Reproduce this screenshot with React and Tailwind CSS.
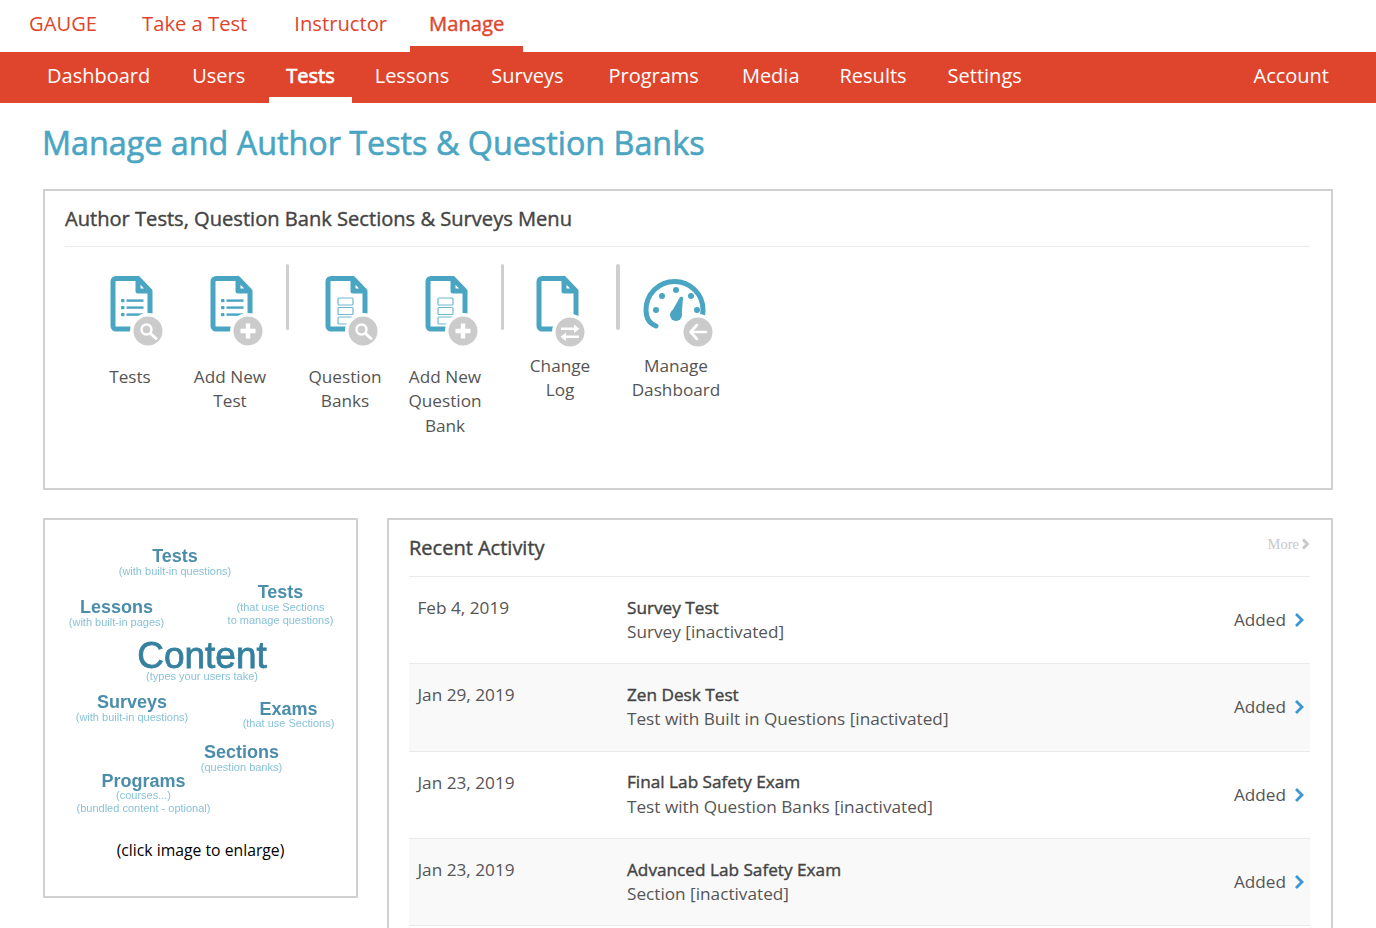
const sans = { fontFamily: '"Open Sans", sans-serif' };

const topNav = [
  { label: "GAUGE", cls: "ml-[9px] px-5" },
  { label: "Take a Test", cls: "ml-[5px] px-5" },
  { label: "Instructor", cls: "ml-[7px] px-5" },
  { label: "Manage", cls: "ml-[3px] px-[19px] [-webkit-text-stroke-width:0.4px]", active: true },
];

const subNav = [
  { label: "Dashboard", cls: "ml-[30px]" },
  { label: "Users", cls: "ml-[8px]" },
  { label: "Tests", cls: "ml-[7px] [-webkit-text-stroke-width:0.7px]", active: true },
  { label: "Lessons", cls: "ml-[6px]" },
  { label: "Surveys", cls: "ml-[8px]" },
  { label: "Programs", cls: "ml-[11px]" },
  { label: "Media", cls: "ml-[9px]" },
  { label: "Results", cls: "ml-[6px]" },
  { label: "Settings", cls: "ml-[7px]" },
];

const activity = [
  { date: "Feb 4, 2019", title: "Survey Test", sub: "Survey [inactivated]" },
  { date: "Jan 29, 2019", title: "Zen Desk Test", sub: "Test with Built in Questions [inactivated]" },
  { date: "Jan 23, 2019", title: "Final Lab Safety Exam", sub: "Test with Question Banks [inactivated]" },
  { date: "Jan 23, 2019", title: "Advanced Lab Safety Exam", sub: "Section [inactivated]" },
];

// word cloud: [text, x, y, size, heavy]
const cloud = [
  ["Tests", 130, 42, 18, 1],
  ["(with built-in questions)", 130, 55, 11, 0],
  ["Tests", 235.5, 78, 18, 1],
  ["(that use Sections", 235.5, 91, 11, 0],
  ["to manage questions)", 235.5, 104, 11, 0],
  ["Lessons", 71.5, 93, 18, 1],
  ["(with built-in pages)", 71.5, 106, 11, 0],
  ["Content", 157, 148, 37, 2],
  ["(types your users take)", 157, 160, 11, 0],
  ["Surveys", 87, 188, 18, 1],
  ["(with built-in questions)", 87, 201, 11, 0],
  ["Exams", 243.5, 195, 18, 1],
  ["(that use Sections)", 243.5, 207, 11, 0],
  ["Sections", 196.5, 238, 18, 1],
  ["(question banks)", 196.5, 251, 11, 0],
  ["Programs", 98.5, 267, 18, 1],
  ["(courses...)", 98.5, 279, 11, 0],
  ["(bundled content - optional)", 98.5, 292, 11, 0],
];

function Badge({ cx, cy, children }) {
  return (
    <g transform={`translate(${cx} ${cy})`}>
      <circle r="18" fill="#fff" />
      <circle r="14.5" fill="#cbcbcb" />
      {children}
    </g>
  );
}

const searchGlyph = (
  <g fill="none" stroke="#fff" strokeLinecap="round">
    <circle cx="-1.5" cy="-1.5" r="5" strokeWidth="2.4" />
    <path d="M2.5 2.5 L8 7.5" strokeWidth="3" />
  </g>
);

const plusGlyph = <path d="M0 -7.5 V7.5 M-7.5 0 H7.5" stroke="#fff" strokeWidth="4.4" fill="none" />;

const swapGlyph = (
  <g fill="#fff">
    <path d="M-9 -4.5 H4 V-7.5 L9.5 -3.3 L4 1 V-2 H-9 Z" />
    <path d="M9 4.5 H-4 V7.5 L-9.5 3.3 L-4 -1 V2 H9 Z" transform="translate(0 1.5)" />
  </g>
);

const backGlyph = <path d="M-1 -7 L-7.5 0 L-1 7 M-7 0 H8" stroke="#fff" strokeWidth="2.6" fill="none" strokeLinecap="round" strokeLinejoin="round" />;

function DocShape({ x = 0 }) {
  return (
    <path
      transform={`translate(${x} 0)`}
      d="M48 6.5 H26 a3 3 0 0 0 -3 3 V54 a3 3 0 0 0 3 3 H57 a3 3 0 0 0 3 -3 V19 L48 6.5 V19 H60"
      fill="none"
      stroke="#4aa5c3"
      strokeWidth="5"
      strokeLinejoin="round"
    />
  );
}

function ListLines() {
  return (
    <g fill="#4aa5c3">
      {[27, 34, 41].map((y) => (
        <g key={y}>
          <rect x="31" y={y} width="3.5" height="3.2" rx="1" />
          <rect x="36.5" y={y + 0.4} width="17" height="2.4" />
        </g>
      ))}
    </g>
  );
}

function BankRows() {
  return (
    <g fill="none" stroke="#6fb8d0" strokeWidth="1.2">
      <rect x="33" y="26" width="15" height="7" rx="1" />
      <rect x="33" y="35.5" width="15" height="7" rx="1" />
      <rect x="33" y="45" width="15" height="7" rx="1" />
    </g>
  );
}

function IconSvg({ children }) {
  return (
    <svg width="80" height="80" viewBox="0 0 80 80" className="block">
      {children}
    </svg>
  );
}

function TestIcon({ glyph }) {
  return (
    <IconSvg>
      <DocShape />
      <ListLines />
      <Badge cx={58} cy={59}>{glyph}</Badge>
    </IconSvg>
  );
}

function BankIcon({ glyph }) {
  return (
    <IconSvg>
      <DocShape />
      <BankRows />
      <Badge cx={58} cy={59}>{glyph}</Badge>
    </IconSvg>
  );
}

function LogIcon() {
  return (
    <IconSvg>
      <DocShape x={-4} />
      <Badge cx={50} cy={60}>{swapGlyph}</Badge>
    </IconSvg>
  );
}

function GaugeIcon() {
  return (
    <IconSvg>
      <g transform="translate(6 0)">
        <path d="M14 54 C6 51 4 44 4 38 A28.5 28.5 0 0 1 61 38 L60.5 44" fill="none" stroke="#4aa5c3" strokeWidth="5" strokeLinecap="round" />
        <g fill="#4aa5c3">
          <circle cx="14" cy="38" r="3" />
          <circle cx="20" cy="24" r="3" />
          <circle cx="34" cy="18" r="3" />
          <circle cx="49" cy="24" r="3" />
          <circle cx="55" cy="38" r="3" />
          <circle cx="34" cy="43" r="6" />
          <path d="M29 41 L38 25 Q41 24 41 26 L39.5 44 Z" />
        </g>
      </g>
      <Badge cx={62} cy={60}>{backGlyph}</Badge>
    </IconSvg>
  );
}

function MenuItem({ icon, lines, short }) {
  return (
    <div className="flex w-[100px] flex-col items-center">
      <div className={short ? "h-[82px]" : "h-[93px]"}>{icon}</div>
      <div className="text-center text-[17.2px] leading-[24.3px] text-[#555]">
        {lines.map((l) => (
          <div key={l}>{l}</div>
        ))}
      </div>
    </div>
  );
}

function Divider({ cls }) {
  return <div className={`mt-[-8px] ml-[6px] h-[66px] rounded-sm bg-[#cfcfcf] ${cls}`} />;
}

function WordCloud() {
  return (
    <svg width="310" height="310" viewBox="0 0 310 310" className="block blur-[0.35px]" style={{ fontFamily: '"Liberation Sans", sans-serif' }}>
      {cloud.map(([text, x, y, size, heavy], i) => (
        <text
          key={i}
          x={x}
          y={y}
          fontSize={size}
          textAnchor="middle"
          fontWeight={heavy === 1 ? 700 : 400}
          fill={heavy === 2 ? "#35809f" : heavy ? "#4b8dab" : "#88c2d8"}
          stroke={heavy === 2 ? "#35809f" : "none"}
          strokeWidth={heavy === 2 ? 0.8 : 0}
        >
          {text}
        </text>
      ))}
    </svg>
  );
}

export default function App() {
  return (
    <div className="h-[928px] overflow-hidden bg-white" style={sans}>
      <div className="flex h-[52px] items-stretch text-[20.2px] text-[#e0452c]">
        {topNav.map((n) => (
          <div key={n.label} className={`relative flex items-center pb-[5px] ${n.cls}`}>
            {n.label}
            {n.active && <div className="absolute inset-x-0 bottom-0 h-[6px] bg-[#df452c]" />}
          </div>
        ))}
      </div>

      <div className="flex h-[51px] items-stretch justify-between bg-[#df452c] text-[20px] text-white">
        <div className="flex items-stretch">
          {subNav.map((n) => (
            <div key={n.label} className={`relative flex items-center px-[17px] pb-[3px] ${n.cls}`}>
              {n.label}
              {n.active && <div className="absolute inset-x-0 bottom-0 h-[6px] bg-white" />}
            </div>
          ))}
        </div>
        <div className="flex items-center pr-[47px] pb-[3px]">Account</div>
      </div>

      <div className="px-[43px]">
        <h1 className="mt-[16px] -ml-px text-[32.3px] leading-[46px] font-normal text-[#4aa5c3] [-webkit-text-stroke-width:0.6px]">Manage and Author Tests &amp; Question Banks</h1>

        <div className="mt-[24px] h-[301px] border-2 border-[#d0d0d0] pr-[21px] pl-[20px]">
          <div className="h-[56px] border-b border-[#eaeaea] pt-[13px] text-[20.1px] leading-[30px] text-[#444] [-webkit-text-stroke-width:0.4px]">Author Tests, Question Bank Sections &amp; Surveys Menu</div>
          <div className="mt-[25px] ml-[15px] flex items-start">
            <MenuItem icon={<TestIcon glyph={searchGlyph} />} lines={["Tests"]} />
            <MenuItem icon={<TestIcon glyph={plusGlyph} />} lines={["Add New", "Test"]} />
            <div className="w-[15px]"><Divider cls="w-[3px]" /></div>
            <MenuItem icon={<BankIcon glyph={searchGlyph} />} lines={["Question", "Banks"]} />
            <MenuItem icon={<BankIcon glyph={plusGlyph} />} lines={["Add New", "Question", "Bank"]} />
            <div className="w-[15px]"><Divider cls="w-[3px]" /></div>
            <MenuItem icon={<LogIcon />} lines={["Change", "Log"]} short />
            <div className="w-[16px]"><Divider cls="w-[4px]" /></div>
            <MenuItem icon={<GaugeIcon />} lines={["Manage", "Dashboard"]} short />
          </div>
        </div>

        <div className="mt-[28px] flex items-start gap-[29px]">
          <div className="h-[380px] w-[315px] shrink-0 border-2 border-[#d0d0d0]">
            <WordCloud />
            <div className="mt-[9px] text-center text-[15.75px] leading-[22px] text-black">(click image to enlarge)</div>
          </div>

          <div className="min-w-0 flex-1 border-2 border-[#d0d0d0] pr-[21px] pb-[40px] pl-[20px]">
            <div className="relative h-[57px] border-b border-[#eaeaea] pt-[13px] text-[20px] leading-[30px] text-[#444] [-webkit-text-stroke-width:0.4px]">
              Recent Activity
              <div className="absolute top-[14px] right-0 flex items-center text-[14.5px] leading-[20px] font-normal text-[#c8c8c8] [-webkit-text-stroke-width:0]" style={{ fontFamily: '"Liberation Serif", serif' }}>
                More
                <svg width="9" height="12" viewBox="0 0 9 12" className="ml-[2px]"><path d="M2 1.5 L6.5 6 L2 10.5" fill="none" stroke="#c8c8c8" strokeWidth="2.8" /></svg>
              </div>
            </div>
            {activity.map((a, i) => (
              <div key={a.title} className={`flex h-[87.3px] items-center border-b border-[#eaeaea] text-[17.2px] leading-[24.3px] text-[#555] ${i % 2 === 1 ? "bg-[#f9f9f9]" : ""}`}>
                <div className="w-[218px] shrink-0 pl-[8.5px]">
                  <div className="-translate-y-3">{a.date}</div>
                </div>
                <div className="min-w-0 flex-1">
                  <div className="text-[#444] [-webkit-text-stroke-width:0.4px]">{a.title}</div>
                  <div>{a.sub}</div>
                </div>
                <div className="flex items-center pr-[5px]">
                  Added
                  <svg width="12" height="16" viewBox="0 0 12 16" className="ml-[7px]"><path d="M3 2 L9 8 L3 14" fill="none" stroke="#3a97cf" strokeWidth="2.8" /></svg>
                </div>
              </div>
            ))}
          </div>
        </div>
      </div>
    </div>
  );
}
